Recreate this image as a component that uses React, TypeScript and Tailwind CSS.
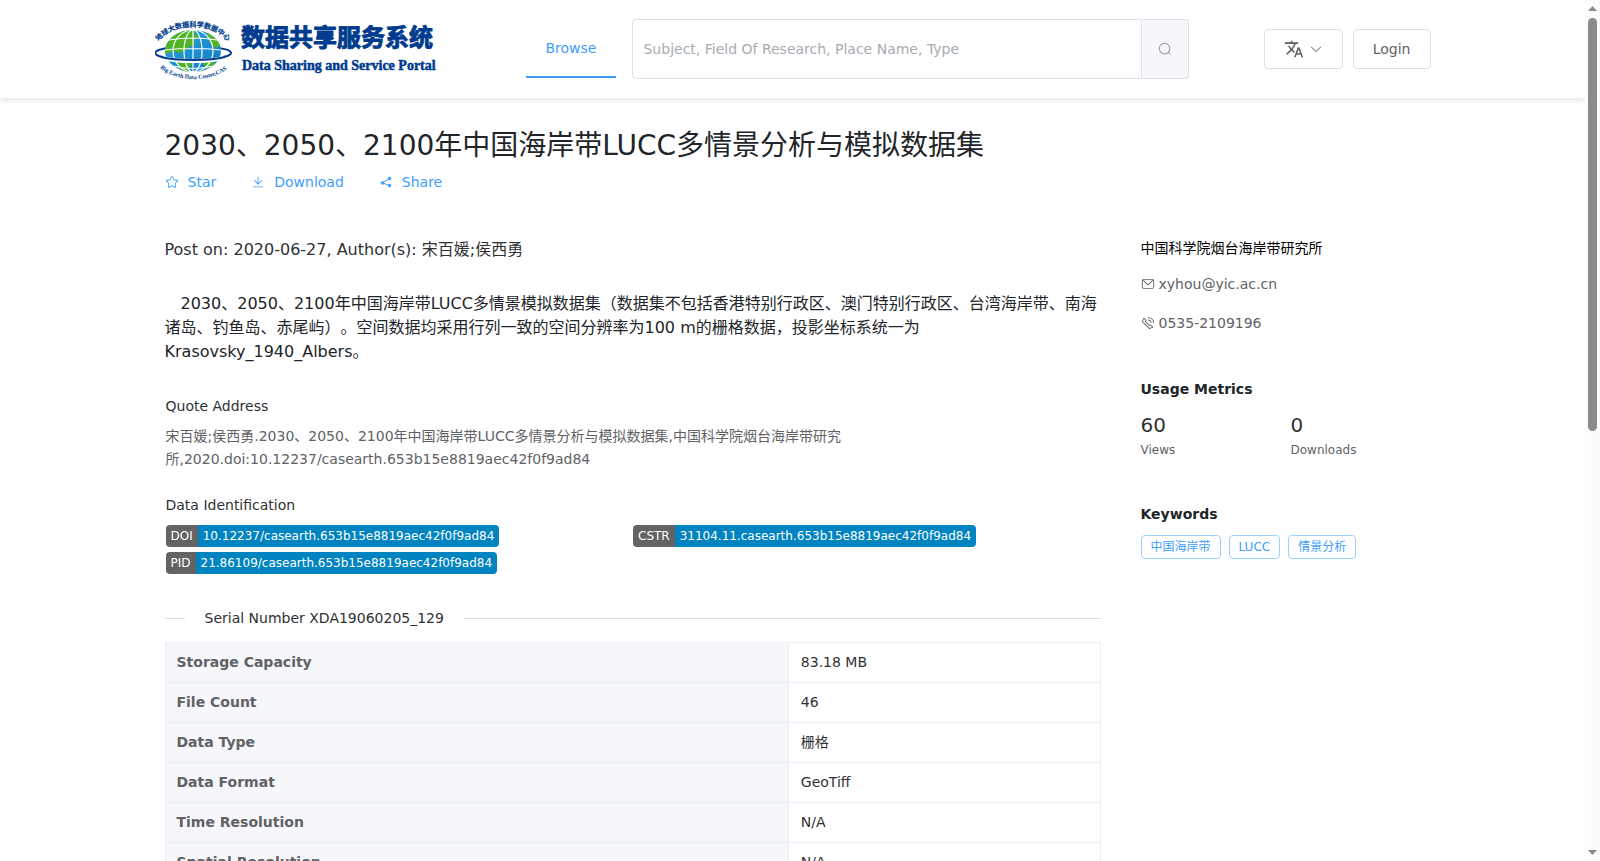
import React, { useState } from 'react';
import { MdTranslate } from 'react-icons/md';

const icons = {
  search: 'm795.904 750.72 124.992 124.928a32 32 0 0 1-45.248 45.248L750.656 795.904a416 416 0 1 1 45.248-45.248zM480 832a352 352 0 1 0 0-704 352 352 0 0 0 0 704',
  arrowDown: 'M831.872 340.864 512 652.672 192.128 340.864a30.592 30.592 0 0 0-42.752 0 29.12 29.12 0 0 0 0 41.6L489.664 714.24a32 32 0 0 0 44.672 0l340.288-331.712a29.12 29.12 0 0 0 0-41.728 30.592 30.592 0 0 0-42.752 0z',
  star: 'm512 747.84 228.16 119.936a6.4 6.4 0 0 0 9.28-6.72l-43.52-254.08 184.512-179.904a6.4 6.4 0 0 0-3.52-10.88l-255.104-37.12L517.76 147.904a6.4 6.4 0 0 0-11.52 0L392.192 379.072l-255.104 37.12a6.4 6.4 0 0 0-3.52 10.88L318.08 606.976l-43.584 254.08a6.4 6.4 0 0 0 9.28 6.72zM313.6 924.48a70.4 70.4 0 0 1-102.144-74.24l37.888-220.928L88.96 472.96A70.4 70.4 0 0 1 128 352.896l221.76-32.256 99.2-200.96a70.4 70.4 0 0 1 126.208 0l99.2 200.96 221.824 32.256a70.4 70.4 0 0 1 39.04 120.064L774.72 629.376l37.888 220.928a70.4 70.4 0 0 1-102.144 74.24L512 820.096l-198.4 104.32z',
  download: 'M160 832h704a32 32 0 1 1 0 64H160a32 32 0 1 1 0-64m384-253.696 236.288-236.352 45.248 45.248L508.8 704 192 387.2l45.248-45.248L480 584.704V128h64z',
  share: 'm679.872 348.8-301.76 188.608a127.808 127.808 0 0 1 5.12 52.16l279.936 104.96a128 128 0 1 1-22.464 59.904l-279.872-104.96a128 128 0 1 1-16.64-166.272l301.696-188.608a128 128 0 1 1 33.92 54.272z',
  message: 'M128 224v512a64 64 0 0 0 64 64h640a64 64 0 0 0 64-64V224zm0-64h768a64 64 0 0 1 64 64v512a128 128 0 0 1-128 128H192A128 128 0 0 1 64 736V224a64 64 0 0 1 64-64M904 224 656.512 506.88a192 192 0 0 1-289.024 0L120 224zm-698.944 0 210.56 240.704a128 128 0 0 0 192.704 0L818.944 224z',
  phone: 'M79.36 432.256 591.744 944.64a32 32 0 0 0 35.2 6.784l253.44-108.544a32 32 0 0 0 9.984-52.032l-153.856-153.92a32 32 0 0 0-36.928-6.016l-69.888 34.944L358.08 394.24l35.008-69.888a32 32 0 0 0-5.952-36.928L233.152 133.568a32 32 0 0 0-52.032 10.048L72.512 397.056a32 32 0 0 0 6.784 35.2zm60.48-29.952 81.536-190.08L325.568 316.48l-24.64 49.216-20.608 41.216 32.576 32.64 271.552 271.552 32.64 32.64 41.216-20.672 49.28-24.576 104.192 104.128-190.08 81.472zM512 320v-64a256 256 0 0 1 256 256h-64a192 192 0 0 0-192-192m0-192V64a448 448 0 0 1 448 448h-64a384 384 0 0 0-384-384',
};

const Icon = ({ name }: { name: keyof typeof icons }) => (
  <svg viewBox="0 0 1024 1024" className="w-3.5 h-3.5 shrink-0" fill="currentColor" aria-hidden="true">
    <path d={icons[name]} />
  </svg>
);

const Logo = () => (
  <svg viewBox="0 0 286 64" className="w-[286px] h-16" role="img" aria-label="Data Sharing and Service Portal">
    <defs>
      <clipPath id="globe">
        <ellipse cx="38" cy="34" rx="28" ry="21" />
      </clipPath>
      <linearGradient id="sea" x1="0" x2="1" y1="0" y2="1">
        <stop offset="0" stopColor="#2fa8e0" />
        <stop offset="1" stopColor="#0b78c4" />
      </linearGradient>
      <path id="arcTop" d="M2 27 C16 4 60 4 74 27" />
      <path id="arcBottom" d="M4 50 C22 66 56 66 73 51" />
    </defs>
    <path d="M13 31 C-3 33 -3 38 8 40 M63 31 C80 33 79 38 68 40" fill="none" stroke="#003b8e" strokeWidth="2" />
    <g clipPath="url(#globe)">
      <rect x="8" y="12" width="60" height="44" fill="url(#sea)" />
      <path d="M9 38 L12 22 L27 13 L41 13 L39 17 L44 19 L39 23 L40 28 L34 30 L29 34 L24 36 L18 34 Z" fill="#4fb526" />
      <path d="M21 42 L30 41 L38 44 L36 49 L31 55 L25 53 Z" fill="#4fb526" />
      <path d="M51 14 L58 18 L66 27 L62 31 L56 28 L53 21 Z M48 46 L57 43 L60 47 L51 52 Z" fill="#4fb526" />
      <g fill="none" stroke="#ffffff" strokeWidth="1.2">
        <ellipse cx="38" cy="34" rx="9" ry="21" />
        <ellipse cx="38" cy="34" rx="20" ry="21" />
        <path d="M38 13 V55 M14 23 Q38 19 62 23 M10 33 Q38 30 66 33" />
        <path d="M18 49 Q38 54 58 49" />
      </g>
    </g>
    <path d="M8 41 C22 45 54 45 69 41" fill="none" stroke="#ffffff" strokeWidth="4" />
    <path d="M6 40 C20 44 56 44 70 40" fill="none" stroke="#003b8e" strokeWidth="2" />
    <g fill="#003b8e" fontWeight="bold">
      <text fontSize="7" stroke="#003b8e" strokeWidth="0.2" fontFamily="'Noto Sans CJK SC', sans-serif" textAnchor="middle">
        <textPath href="#arcTop" startOffset="50%">地球大数据科学数据中心</textPath>
      </text>
      <text fontSize="6" fontFamily="'Liberation Serif', serif" textAnchor="middle">
        <textPath href="#arcBottom" startOffset="50%">Big Earth Data Center,CAS</textPath>
      </text>
      <text x="86" y="29" fontSize="24" stroke="#003b8e" strokeWidth="0.9" fontFamily="'Noto Sans CJK SC', sans-serif">数据共享服务系统</text>
      <text x="87" y="53" fontSize="14" stroke="#003b8e" strokeWidth="0.5" fontFamily="'Liberation Serif', serif">Data Sharing and Service Portal</text>
    </g>
  </svg>
);

const actions = [
  { icon: 'star', label: 'Star' },
  { icon: 'download', label: 'Download' },
  { icon: 'share', label: 'Share' },
] as const;

const identifiers = [
  { type: 'DOI', value: '10.12237/casearth.653b15e8819aec42f0f9ad84' },
  { type: 'CSTR', value: '31104.11.casearth.653b15e8819aec42f0f9ad84' },
  { type: 'PID', value: '21.86109/casearth.653b15e8819aec42f0f9ad84' },
];

const properties = [
  { name: 'Storage Capacity', value: '83.18 MB' },
  { name: 'File Count', value: '46' },
  { name: 'Data Type', value: '栅格' },
  { name: 'Data Format', value: 'GeoTiff' },
  { name: 'Time Resolution', value: 'N/A' },
  { name: 'Spatial Resolution', value: 'N/A' },
];

const keywords = ['中国海岸带', 'LUCC', '情景分析'];

const Header = () => {
  const [query, setQuery] = useState('');

  return (
    <header className="relative bg-white shadow-[0_2px_6px_rgba(0,0,0,0.12)]">
      <div className="max-w-[1280px] mx-auto px-0.5 h-[98px] flex items-center">
        <a href="#home" className="w-[371px] shrink-0">
          <Logo />
        </a>
        <nav className="shrink-0 mr-4">
          <a href="#browse" className="block h-[58px] px-5 border-b-2 border-[#409eff] text-[#409eff] leading-[56px]">
            Browse
          </a>
        </nav>
        <form className="flex flex-1 h-[60px]" onSubmit={(e) => e.preventDefault()}>
          <input
            type="text"
            aria-label="Search"
            className="flex-1 min-w-0 px-2.5 rounded-l border border-[#dcdfe6] placeholder:text-[#a8abb2] outline-none"
            placeholder="Subject, Field Of Research, Place Name, Type"
            value={query}
            onChange={(e) => setQuery(e.target.value)}
          />
          <button
            type="submit"
            aria-label="Submit search"
            className="w-[47px] flex items-center justify-center rounded-r border border-l-white border-[#dcdfe6] bg-[#f5f7fa] text-[#909399]"
          >
            <Icon name="search" />
          </button>
        </form>
        <div className="flex gap-2.5 ml-[75px] text-[#606266]">
          <button aria-label="Language" className="h-10 px-[19px] flex items-center gap-[5px] rounded border border-[#dcdfe6]">
            <MdTranslate className="w-5 h-5" />
            <Icon name="arrowDown" />
          </button>
          <button className="h-10 px-[19px] rounded border border-[#dcdfe6]">Login</button>
        </div>
      </div>
    </header>
  );
};

const Sidebar = () => (
  <aside className="flex-1 pl-10 text-[#606266]">
    <p className="text-black">中国科学院烟台海岸带研究所</p>
    <p className="mt-4 flex items-center gap-1">
      <Icon name="message" />
      xyhou@yic.ac.cn
    </p>
    <p className="mt-[19px] flex items-center gap-1">
      <Icon name="phone" />
      0535-2109196
    </p>

    <h2 className="mt-[46px] font-bold text-[#212529]">Usage Metrics</h2>
    <div className="mt-3 grid grid-cols-2 w-[300px]">
      <div>
        <p className="text-xl text-[#303133]">60</p>
        <p className="mt-[3px] text-xs">Views</p>
      </div>
      <div>
        <p className="text-xl text-[#303133]">0</p>
        <p className="mt-[3px] text-xs">Downloads</p>
      </div>
    </div>

    <h2 className="mt-[46px] font-bold text-[#212529]">Keywords</h2>
    <div className="mt-[11px] flex gap-2">
      {keywords.map((keyword) => (
        <span key={keyword} className="h-6 px-[9px] rounded border border-[#a0cfff] text-xs leading-[22px] text-[#409eff]">
          {keyword}
        </span>
      ))}
    </div>
  </aside>
);

const Scrollbar = () => (
  <div className="w-[15px] shrink-0 flex flex-col items-center justify-between bg-[#fcfcfc] py-1.5" aria-hidden="true">
    <svg viewBox="0 0 9 5" className="w-[9px] h-[5px]" fill="#8b8b8b"><path d="M0 5 L4.5 0 L9 5 Z" /></svg>
    <div className="flex-1 w-full flex flex-col items-center py-[7px]">
      <div className="w-[9px] h-1/2 rounded-full bg-[#8b8b8b]"></div>
    </div>
    <svg viewBox="0 0 9 5" className="w-[9px] h-[5px]" fill="#8b8b8b"><path d="M0 0 L4.5 5 L9 0 Z" /></svg>
  </div>
);

const App = () => (
  <div className="flex h-screen bg-white font-['DejaVu_Sans','Noto_Sans_CJK_SC',sans-serif] text-sm text-[#303133] [text-spacing-trim:space-all]">
    <div className="flex-1 min-w-0 overflow-hidden">
      <Header />

      <main className="max-w-[1280px] mx-auto px-3 pt-[30px]">
        <h1 className="text-[28px] leading-9 text-[#212529]">2030、2050、2100年中国海岸带LUCC多情景分析与模拟数据集</h1>
        <div className="mt-2 flex gap-[35px] text-[#409eff]">
          {actions.map((action) => (
            <button key={action.label} className="flex items-center gap-[9px]">
              <Icon name={action.icon} />
              {action.label}
            </button>
          ))}
        </div>

        <div className="mt-[46px] flex">
          <div className="w-[936px] shrink-0">
            <p className="text-base">Post on: 2020-06-27, Author(s): 宋百媛;侯西勇</p>
            <p className="mt-[30px] text-base indent-4 text-[#212529]">
              2030、2050、2100年中国海岸带LUCC多情景模拟数据集（数据集不包括香港特别行政区、澳门特别行政区、台湾海岸带、南海诸岛、钓鱼岛、赤尾屿）。空间数据均采用行列一致的空间分辨率为100 m的栅格数据，投影坐标系统一为Krasovsky_1940_Albers。
            </p>

            <section className="mt-8 pl-px">
              <h2>Quote Address</h2>
              <p className="mt-[9px] w-3/4 pr-4 leading-[23px] text-[#606266]">
                宋百媛;侯西勇.2030、2050、2100年中国海岸带LUCC多情景分析与模拟数据集,中国科学院烟台海岸带研究所,2020.doi:10.12237/casearth.653b15e8819aec42f0f9ad84
              </p>
            </section>

            <section className="mt-6 pl-px">
              <h2>Data Identification</h2>
              <div className="mt-2.5 grid grid-cols-2 gap-y-[5px] text-xs leading-[22px] text-white">
                {identifiers.map((item) => (
                  <div key={item.type} className="flex">
                    <span className="px-[5px] rounded-l bg-[#636363]">{item.type}</span>
                    <span className="px-[5px] rounded-r bg-[#0083c1]">{item.value}</span>
                  </div>
                ))}
              </div>
            </section>

            {/* Serial number divider */}
            <div className="mt-[34px] flex items-center gap-5">
              <div className="w-5 h-px bg-[#dcdfe6]"></div>
              <span>Serial Number XDA19060205_129</span>
              <div className="flex-1 h-px bg-[#dcdfe6]"></div>
            </div>

            <table className="mt-3.5 w-full table-fixed border-collapse">
              <tbody>
                {properties.map((item) => (
                  <tr key={item.name} className="h-10">
                    <th scope="row" className="w-2/3 px-[11px] pb-0.5 border border-[#ebeef5] bg-[#f5f7fa] text-left font-bold text-[#606266]">
                      {item.name}
                    </th>
                    <td className="px-3 pb-0.5 border border-[#ebeef5]">{item.value}</td>
                  </tr>
                ))}
              </tbody>
            </table>
          </div>

          <Sidebar />
        </div>
      </main>
    </div>
    <Scrollbar />
  </div>
);

export default App;
